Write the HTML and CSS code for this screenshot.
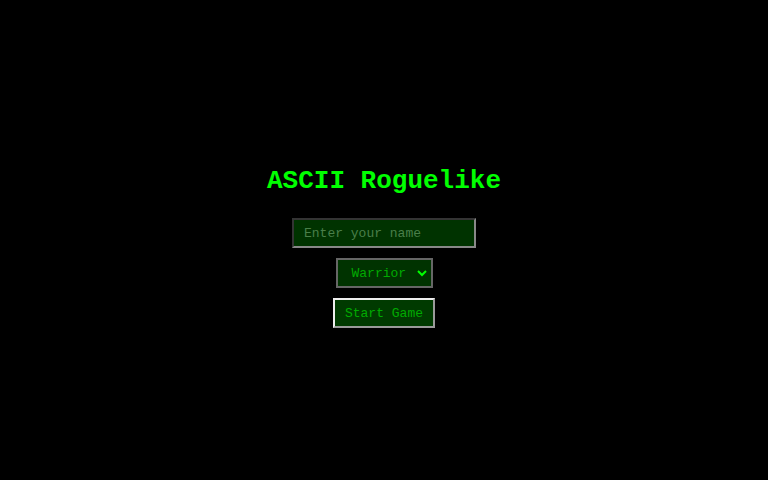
FILE: index.html
```html
<!DOCTYPE html>
<html lang="en">
<head>
    <meta charset="UTF-8">
    <meta name="viewport" content="width=device-width, initial-scale=1.0">
    <title>ASCII Roguelike</title>
    <link rel="stylesheet" href="styles.css">
</head>
<body>

    <div class="start-screen">
        <h1 class="title">ASCII Roguelike</h1>
        <input type="text" id="playerName" class="name-input" placeholder="Enter your name">
        <select id="playerClass" class="class-select">
            <option>Warrior</option>
            <option>Mage</option>
            <option>Rogue</option>
        </select>
        <button type="button" class="start-btn">Start Game</button>
    </div>

</body>
</html>
```

FILE: styles.css
```css
html, body {
    margin: 0;
    height: 100%;
    background-color: #000;
}

body {
    font-family: "Liberation Mono", "Courier New", monospace;
    color: #00ff00;
    display: flex;
    align-items: center;
    justify-content: center;
}

.start-screen {
    display: flex;
    flex-direction: column;
    align-items: center;
    gap: 10px;
}

.title {
    font-size: 26px;
    font-weight: bold;
    margin: 14px 0 12px;
    color: #00ff00;
}

.name-input,
.class-select,
.start-btn {
    font-family: "Liberation Mono", "Courier New", monospace;
    font-size: 13px;
    background-color: #003300;
    color: #00aa00;
    box-sizing: border-box;
    height: 30px;
}

.name-input {
    width: 184px;
    padding: 5px 10px;
    border: 2px inset #888;
}

.name-input::placeholder {
    color: #4a7f4a;
}

.class-select {
    width: 97px;
    margin-left: 2px;
    padding: 0 0 0 13px;
    border: 2px solid #666;
    appearance: none;
    background-image: url("data:image/svg+xml;utf8,<svg xmlns='http://www.w3.org/2000/svg' width='10' height='8'><path d='M1 2 L5 6 L9 2' fill='none' stroke='%2300ff00' stroke-width='2'/></svg>");
    background-repeat: no-repeat;
    background-position: right 4px center;
}

.start-btn {
    width: 102px;
    border: 2px outset #eee;
    background-color: #003a00;
}
```
